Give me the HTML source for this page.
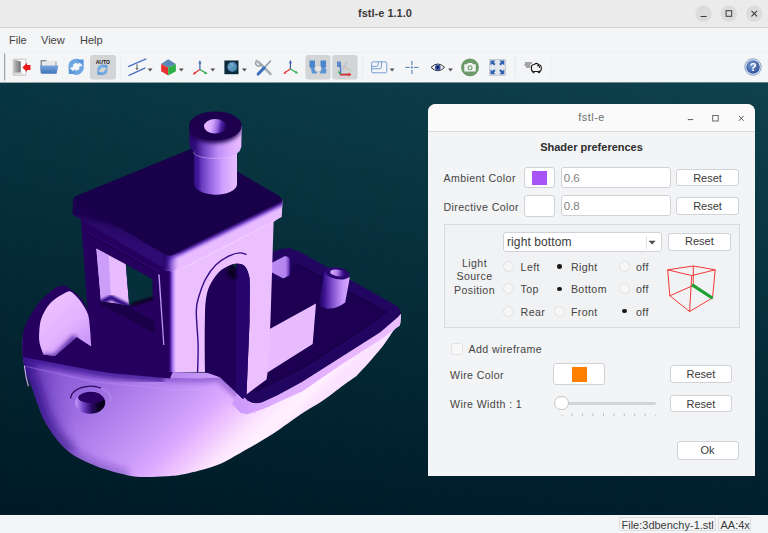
<!DOCTYPE html>
<html><head><meta charset="utf-8"><title>fstl-e 1.1.0</title>
<style>
*{box-sizing:border-box;margin:0;padding:0}
html,body{width:768px;height:533px;overflow:hidden;background:#f4f5f7;font-family:"Liberation Sans",sans-serif;font-size:11px;color:#3d3d3d}
.abs{position:absolute}
#titlebar{left:0;top:0;width:768px;height:28px;background:#ebebeb;border-bottom:1px solid #cfcfcf}
#title{left:1px;width:768px;top:7px;text-align:center;font-weight:bold;color:#3a3a3a;font-size:11px}
.wbtn{width:17px;height:17px;border-radius:50%;background:#dcdcdc;top:5px}
#menubar{left:0;top:28px;width:768px;height:24px;background:#f4f5f7}
.menu{top:34px;font-size:11px;color:#424242}
#toolbar{left:0;top:52px;width:768px;height:31px;background:#f4f5f7;border-top:1px solid #eeeff1}
#viewport{left:0;top:82.6px;width:768px;height:432.1px;background:#04303c}
#statusbar{left:0;top:515px;width:768px;height:18px;background:#f4f5f7}
.sbox{top:516.8px;height:14.6px;border:1px solid #dcdddf;border-radius:1px;background:#f4f5f7;font-size:11px;line-height:14px;padding-left:1.2px;overflow:visible;color:#3a3a3a;white-space:nowrap}
#dlg{left:428px;top:104px;width:327px;height:372px;background:#f3f4f5;border-radius:8px 8px 0 0;overflow:hidden}
#dlgtitle{left:0;top:0;width:327px;height:28px;background:#fafafa;border-bottom:1px solid #dcdcdc}
.btn{background:#fff;border:1px solid #cfd2d6;border-radius:3px;text-align:center;font-size:11px;color:#3a3a3a}
.lbl{font-size:10.6px;letter-spacing:.4px;color:#444;white-space:nowrap}
.inp{background:#fff;border:1px solid #cfd2d6;border-radius:3px;font-size:11.5px;color:#808080;padding-left:1.6px}
.radio{width:11px;height:11px;border-radius:50%;border:1px solid #e0e1e3;background:#f6f6f7}
.dot{width:4.6px;height:4.6px;border-radius:50%;background:#1a1a1a}
</style></head><body>
<div id="titlebar" class="abs"></div>
<div id="title" class="abs">fstl-e 1.1.0</div>
<svg class="abs" style="left:690px;top:0" width="78" height="28" viewBox="690 0 78 28">
<circle cx="703.6" cy="13.6" r="8.2" fill="#dcdcdc"/><circle cx="728.9" cy="13.6" r="8.2" fill="#dcdcdc"/><circle cx="754.3" cy="13.6" r="8.2" fill="#dcdcdc"/>
<path d="M700.6 16.5 H706.6" stroke="#3a3a3a" stroke-width="1" fill="none"/>
<rect x="726.1" y="10.7" width="5.6" height="5.6" stroke="#3a3a3a" stroke-width="1" fill="none"/>
<path d="M751.5 10.8 L757.1 16.4 M757.1 10.8 L751.5 16.4" stroke="#3a3a3a" stroke-width="1.1" fill="none"/>
</svg>
<div id="menubar" class="abs"></div>
<div class="abs menu" style="left:9px">File</div>
<div class="abs menu" style="left:41px">View</div>
<div class="abs menu" style="left:80px">Help</div>
<div id="toolbar" class="abs"></div>
<svg class="abs" style="left:0;top:52px" width="768" height="31" viewBox="0 52 768 31">
<defs>
<linearGradient id="door" x1="0" y1="0" x2="1" y2="0"><stop offset="0" stop-color="#c4c4c4"/><stop offset="0.45" stop-color="#9a9a9a"/><stop offset="1" stop-color="#6e7278"/></linearGradient>
<linearGradient id="fold" x1="0" y1="0" x2="0" y2="1"><stop offset="0" stop-color="#7aa6dc"/><stop offset="1" stop-color="#3f74b8"/></linearGradient>
<radialGradient id="helpg" cx="0.4" cy="0.35" r="0.7"><stop offset="0" stop-color="#7a9ad0"/><stop offset="1" stop-color="#2a4f98"/></radialGradient>
<radialGradient id="sph" cx="0.35" cy="0.35" r="0.8"><stop offset="0" stop-color="#8ab4e0"/><stop offset="1" stop-color="#2f6a9a"/></radialGradient>
</defs>
<rect x="4.2" y="53.5" width="1" height="27" fill="#8c8c8c"/>
<!-- exit -->
<path d="M13.2 59.2 L25.8 59.2 L25.8 75.3 L13.2 75.3 Z" fill="#fbfbfb" stroke="#a6a6a6" stroke-width="0.6"/>
<path d="M13.5 59.5 L20.8 61.4 L20.8 72.9 L13.5 75 Z" fill="url(#door)"/>
<path d="M13.5 72.5 L20.8 72.2 L25.5 75 L13.5 75 Z" fill="#dcdcdc" opacity="0.9"/>
<path d="M22.4 67.4 L27 62.7 L27 64.9 L30.5 64.9 L30.5 69.9 L27 69.9 L27 72.1 Z" fill="#ea1a1a"/>
<!-- folder -->
<path d="M40.5 60 L46 60 L47.5 61.5 L56.5 61.5 L56.5 73 L40.5 73 Z" fill="#8a8f98"/>
<path d="M42 61.5 L55.5 60.5 L55.5 66 L42 66 Z" fill="#e8e8e8"/>
<path d="M39.8 65.5 L58.4 65.5 L56.5 73.7 L41.3 73.7 Z" fill="url(#fold)"/>
<!-- reload -->
<g fill="none" stroke="#6ea6e2" stroke-width="4.2">
<path d="M71 67.6 A5.1 5.1 0 0 1 79.6 62.6"/>
<path d="M81.3 66 A5.1 5.1 0 0 1 72.7 71"/>
</g>
<path d="M76.6 59.6 L83.6 59.6 L83.6 66.6 Z" fill="#5a96da"/>
<path d="M75.7 74 L68.7 74 L68.7 67 Z" fill="#5a96da"/>
<!-- auto -->
<rect x="90" y="55" width="26" height="24.6" rx="3" fill="#d3d4d6"/>
<text x="102.8" y="64.4" font-family="Liberation Sans, sans-serif" font-size="5.1" font-weight="bold" text-anchor="middle" fill="#141414">AUTO</text>
<g fill="none" stroke="#74aae4" stroke-width="2.8">
<path d="M99 70.3 A3.5 3.5 0 0 1 104.8 66.9"/>
<path d="M105.9 69.3 A3.5 3.5 0 0 1 100.1 72.7"/>
</g>
<path d="M102.6 64.8 L107.4 64.8 L107.4 69.6 Z" fill="#5f9adc"/>
<path d="M102.2 74.7 L97.4 74.7 L97.4 69.9 Z" fill="#5f9adc"/>
<rect x="120.3" y="56" width="0.8" height="22" fill="#e9eaec"/>
<!-- lines -->
<g stroke="#4a72c4" stroke-width="1.3" fill="none"><path d="M128.1 66.6 L146.2 58.8"/><path d="M128.5 75.7 L145.4 67.8"/></g>
<path d="M137 64.2 V69.2 M135.8 68 L137 69.4 L138.2 68" stroke="#333" stroke-width="0.8" fill="none"/>
<path d="M147.7 68.4 H152.5 L150.1 71.4 Z" fill="#505050"/>
<!-- cube -->
<path d="M168.2 59.3 L175.9 63.9 L168.2 67.4 L161.1 63.9 Z" fill="#5a86b8"/>
<path d="M161.1 63.9 L168.2 67.4 L168.2 75.4 L161.1 71.2 Z" fill="#e83232"/>
<path d="M175.9 63.9 L168.2 67.4 L168.2 75.4 L175.9 71.2 Z" fill="#2cb048"/>
<path d="M178.9 68.4 H183.7 L181.3 71.4 Z" fill="#505050"/>
<!-- axes -->
<g fill="none" stroke-width="1.2"><path d="M199.9 69.5 V62" stroke="#3a5fae"/><path d="M199.9 69.5 L194.4 73.2" stroke="#e03030"/><path d="M199.9 69.5 L205.8 73" stroke="#2aa848"/></g>
<path d="M199.9 60 L201.4 63.4 H198.4 Z" fill="#3a5fae"/><path d="M192.6 74.4 L194.6 71.8 L196 74 Z" fill="#e03030"/><path d="M207.6 74.1 L205.5 71.6 L204.2 73.9 Z" fill="#2aa848"/>
<path d="M210.35 68.4 H215.15 L212.75 71.4 Z" fill="#505050"/>
<!-- sphere -->
<rect x="224.4" y="60.5" width="14.1" height="13.7" fill="#0b2a3c"/>
<circle cx="232.3" cy="67" r="4.9" fill="url(#sph)"/>
<path d="M228.6 64 L235.6 70.4" stroke="#3fa0a0" stroke-width="1.1"/>
<path d="M242 68.4 H246.8 L244.4 71.4 Z" fill="#505050"/>
<!-- tools -->
<path d="M258.5 62 L270.5 74" stroke="#a8b0b8" stroke-width="2.6" stroke-linecap="round"/>
<path d="M257.5 60.3 A3 3 0 1 0 261.5 64" fill="none" stroke="#9aa2aa" stroke-width="1.6"/>
<path d="M270.5 61 L264 68" stroke="#8a96a4" stroke-width="1.5" stroke-linecap="round"/>
<path d="M264 68 L258.2 74" stroke="#3a72c0" stroke-width="3.2" stroke-linecap="round"/>
<!-- axes 2 -->
<g fill="none" stroke-width="1.2"><path d="M290.4 69 V61.8" stroke="#3a5fae"/><path d="M290.4 69 L285 72.5" stroke="#e03030"/><path d="M290.4 69 L296.5 72.4" stroke="#2aa848"/></g>
<path d="M290.4 59.8 L291.9 63.2 H288.9 Z" fill="#3a5fae"/><path d="M283.2 73.8 L285.2 71.2 L286.6 73.4 Z" fill="#e03030"/><path d="M298.3 73.5 L296.2 71 L294.9 73.3 Z" fill="#2aa848"/>
<!-- checked 1 -->
<rect x="305.4" y="55" width="25.2" height="24.6" rx="3" fill="#d3d4d6"/>
<path d="M309.5 60.5 L315 60.5 L315 67 L312.5 69.5 L309.5 67 Z" fill="#4a86cc"/>
<path d="M320.5 60.5 L326 60.5 L326 67 L323.5 69.5 L320.5 67 Z" fill="#4a86cc"/>
<path d="M311 69 L316 67 L317 73.5 L312 73.5 Z" fill="#5a94d4"/>
<path d="M321 67 L326.5 69 L326 73.5 L320 73.5 Z" fill="#5a94d4"/>
<circle cx="318" cy="68.6" r="3.4" fill="#e6e6e6" stroke="#aaa" stroke-width="0.5"/>
<!-- checked 2 -->
<rect x="332.2" y="55" width="25.4" height="24.6" rx="3" fill="#d3d4d6"/>
<path d="M337 61.5 L341 61.5 L341 67 L337 67 Z" fill="#5a8ac8"/>
<path d="M340.5 65 V74.5 H350" fill="none" stroke="#4a7ac0" stroke-width="1.4"/>
<path d="M340 74.6 H349" stroke="#e82c2c" stroke-width="1.6"/><path d="M351.5 74.6 L348.5 72.8 V76.4 Z" fill="#e82c2c"/>
<path d="M340.5 74 L338.2 71.5" stroke="#2aa848" stroke-width="1.4"/>
<path d="M341 72 L347 62" stroke="#8ab8e0" stroke-width="0.8"/><path d="M344 66 L351.5 71" stroke="#9ad0a8" stroke-width="0.8"/><path d="M343 65 L347 70" stroke="#f0a0a0" stroke-width="0.8"/>
<rect x="362" y="56" width="0.8" height="22" fill="#e9eaec"/>
<!-- rects -->
<g fill="none" stroke="#6a94d0" stroke-width="0.9"><rect x="371.6" y="61.8" width="15.2" height="11" rx="1.5"/><path d="M371.6 68.8 H379 Q381.5 68.8 381.5 66.3 V61.8"/><path d="M371.6 66.4 H376.2 Q378.2 66.4 378.2 64.4 V61.8"/></g>
<path d="M389.7 68.4 H394.5 L392.1 71.4 Z" fill="#505050"/>
<!-- crosshair -->
<g stroke="#3a6ab0" stroke-width="0.9"><path d="M411.9 60.8 V65.2 M411.9 69.6 V74 M405.3 67.4 H409.7 M414.1 67.4 H418.5"/><path d="M411.9 66.4 V68.4 M410.9 67.4 H412.9"/></g>
<!-- eye -->
<path d="M431 67.4 Q437.8 60.6 444.6 67.4 Q437.8 74.2 431 67.4 Z" fill="#f8f8f8" stroke="#333" stroke-width="1"/>
<circle cx="437.8" cy="67.4" r="2.9" fill="#3a5cb0"/><circle cx="437.8" cy="67.4" r="1.3" fill="#101a40"/>
<path d="M448.1 68.4 H452.9 L450.5 71.4 Z" fill="#505050"/>
<!-- camera -->
<circle cx="470" cy="67.4" r="8.9" fill="#6b9a68"/>
<path d="M464.3 64.3 H467 L468 62.9 H472 L473 64.3 H475.7 V71.6 H464.3 Z" fill="#f4f4f4"/>
<circle cx="470" cy="67.8" r="2.5" fill="#6b9a68"/><circle cx="470" cy="67.8" r="1.5" fill="#e8f0e8"/>
<!-- fullscreen -->
<rect x="489.5" y="59.5" width="15.8" height="15.8" fill="#e4e7ec" stroke="#b4b8be" stroke-width="0.6"/>
<g fill="#2a62b0"><path d="M490.5 60.5 H495.5 L493.8 62.2 L495.6 64 L494 65.6 L492.2 63.8 L490.5 65.5 Z"/><path d="M504.3 60.5 H499.3 L501 62.2 L499.2 64 L500.8 65.6 L502.6 63.8 L504.3 65.5 Z"/><path d="M490.5 74.3 H495.5 L493.8 72.6 L495.6 70.8 L494 69.2 L492.2 71 L490.5 69.3 Z"/><path d="M504.3 74.3 H499.3 L501 72.6 L499.2 70.8 L500.8 69.2 L502.6 71 L504.3 69.3 Z"/></g>
<rect x="514.8" y="56" width="0.8" height="22" fill="#e6e7e9"/>
<!-- rabbit -->
<g fill="none" stroke="#1a1a1a" stroke-width="1.1"><path d="M531.5 68 Q531 64.5 534.5 64.5 Q536 62.2 538.5 64.5 Q541.5 65 541.3 68.5 Q541.5 71.5 538.5 71.5 L533 71.5 Q531 71 531.5 68 Z"/><path d="M537 66 Q539.5 64.5 539.5 68"/><path d="M533 71.5 Q532.5 73 534.5 72.6 M538 71.5 Q538 73.2 540 72.4"/></g>
<path d="M525 63 H532 M524.5 65 H530.5 M526 67 H530.5" stroke="#444" stroke-width="0.9"/>
<rect x="550.4" y="56" width="0.8" height="22" fill="#ecedef"/>
<!-- help -->
<circle cx="753" cy="67" r="8.2" fill="#e8ecf4" stroke="#6a86c0" stroke-width="0.8"/>
<circle cx="753" cy="67" r="6.8" fill="url(#helpg)"/>
<text x="753" y="71" font-family="Liberation Sans, sans-serif" font-size="11" font-weight="bold" text-anchor="middle" fill="#fff">?</text>
</svg>

<div id="viewport" class="abs"></div>
<svg class="abs" style="left:0;top:0" width="768" height="533" viewBox="0 0 768 533">
<defs>
<linearGradient id="bgL" x1="0" y1="0" x2="0" y2="1"><stop offset="0" stop-color="#083642"/><stop offset="1" stop-color="#001a26"/></linearGradient>
<linearGradient id="bgR" x1="0" y1="0" x2="0" y2="1"><stop offset="0" stop-color="#0f424d"/><stop offset="1" stop-color="#001f2e"/></linearGradient>
<linearGradient id="mH" x1="0" y1="0" x2="1" y2="0"><stop offset="0" stop-color="#000"/><stop offset="1" stop-color="#fff"/></linearGradient>
<mask id="mk"><rect x="0" y="82" width="768" height="434" fill="url(#mH)"/></mask>
<filter id="b1" x="-20%" y="-20%" width="140%" height="140%"><feGaussianBlur stdDeviation="1"/></filter>
<filter id="b2" x="-20%" y="-20%" width="140%" height="140%"><feGaussianBlur stdDeviation="2"/></filter>
<filter id="b3" x="-30%" y="-30%" width="160%" height="160%"><feGaussianBlur stdDeviation="3.5"/></filter>
<linearGradient id="hull" gradientUnits="userSpaceOnUse" x1="30" y1="394" x2="178.5" y2="542.5">
 <stop offset="0" stop-color="#8858d4"/><stop offset="0.19" stop-color="#9a6ae0"/><stop offset="0.36" stop-color="#b080ec"/><stop offset="0.54" stop-color="#c898f8"/><stop offset="0.66" stop-color="#dcaaff"/><stop offset="0.75" stop-color="#eec4ff"/><stop offset="0.85" stop-color="#fce6ff"/><stop offset="0.93" stop-color="#fff0ff"/><stop offset="1" stop-color="#fbe2ff"/></linearGradient>
<linearGradient id="hullL" gradientUnits="userSpaceOnUse" x1="22" y1="380" x2="62" y2="370">
 <stop offset="0" stop-color="#160044"/><stop offset="0.09" stop-color="#240868" stop-opacity="0.95"/><stop offset="0.25" stop-color="#3a1290" stop-opacity="0.7"/><stop offset="0.5" stop-color="#3a1290" stop-opacity="0.3"/><stop offset="0.75" stop-color="#3a1290" stop-opacity="0.1"/><stop offset="1" stop-color="#3a1290" stop-opacity="0"/></linearGradient>
<linearGradient id="sband" gradientUnits="userSpaceOnUse" x1="240" y1="0" x2="400" y2="0">
 <stop offset="0" stop-color="#cc9afa"/><stop offset="0.2" stop-color="#dcaaff"/><stop offset="0.7" stop-color="#e8b6ff"/><stop offset="1" stop-color="#ecbeff"/></linearGradient>
<linearGradient id="band" gradientUnits="userSpaceOnUse" x1="25" y1="0" x2="240" y2="0">
 <stop offset="0" stop-color="#4a1fa8"/><stop offset="0.45" stop-color="#9464e0"/><stop offset="1" stop-color="#c896fb"/></linearGradient>
<linearGradient id="pipe" gradientUnits="userSpaceOnUse" x1="194" y1="0" x2="238" y2="0">
 <stop offset="0" stop-color="#3a1290"/><stop offset="0.09" stop-color="#3e1698"/><stop offset="0.18" stop-color="#6a3cc0"/><stop offset="0.42" stop-color="#a070e8"/><stop offset="0.66" stop-color="#d0a0ff"/><stop offset="0.89" stop-color="#e4b8ff"/><stop offset="1" stop-color="#e8bcff"/></linearGradient>
<linearGradient id="flange" gradientUnits="userSpaceOnUse" x1="189" y1="0" x2="242" y2="0">
 <stop offset="0" stop-color="#2a0870"/><stop offset="0.11" stop-color="#2e0c78"/><stop offset="0.28" stop-color="#7040c0"/><stop offset="0.56" stop-color="#c090f8"/><stop offset="0.83" stop-color="#e0b0ff"/><stop offset="1" stop-color="#e8bcff"/></linearGradient>
<linearGradient id="hole" gradientUnits="userSpaceOnUse" x1="204" y1="124" x2="226" y2="128">
 <stop offset="0" stop-color="#e8baff"/><stop offset="0.35" stop-color="#d8a8ff"/><stop offset="0.6" stop-color="#9a6ae0"/><stop offset="0.78" stop-color="#4a1fa0"/><stop offset="1" stop-color="#22025c"/></linearGradient>
<linearGradient id="roofR" gradientUnits="userSpaceOnUse" x1="164" y1="0" x2="180" y2="0">
 <stop offset="0" stop-color="#26066a"/><stop offset="0.25" stop-color="#4a1fa4"/><stop offset="0.5" stop-color="#9c6ce6"/><stop offset="0.8" stop-color="#d8a8ff"/><stop offset="1" stop-color="#e8bcff"/></linearGradient>
<linearGradient id="roofC" gradientUnits="userSpaceOnUse" x1="164" y1="0" x2="180" y2="0">
 <stop offset="0" stop-color="#26066a"/><stop offset="0.25" stop-color="#3a1290" stop-opacity="0.92"/><stop offset="0.5" stop-color="#6a3cc4" stop-opacity="0.65"/><stop offset="0.8" stop-color="#a878ec" stop-opacity="0.25"/><stop offset="1" stop-color="#e8bcff" stop-opacity="0"/></linearGradient>
<linearGradient id="roofLf" gradientUnits="userSpaceOnUse" x1="120" y1="225" x2="116" y2="240">
 <stop offset="0" stop-color="#1c0050"/><stop offset="0.3" stop-color="#280866"/><stop offset="1" stop-color="#2d0b72"/></linearGradient>
<linearGradient id="roofE" gradientUnits="userSpaceOnUse" x1="228.5" y1="226.8" x2="232" y2="234">
 <stop offset="0" stop-color="#19004b"/><stop offset="0.35" stop-color="#5a2ab4" stop-opacity="0.9"/><stop offset="0.7" stop-color="#b07ef2" stop-opacity="0.5"/><stop offset="1" stop-color="#e8bcff" stop-opacity="0"/></linearGradient>
<linearGradient id="wall" gradientUnits="userSpaceOnUse" x1="168.5" y1="0" x2="176.5" y2="0">
 <stop offset="0" stop-color="#26005e"/><stop offset="0.25" stop-color="#4a1fa4"/><stop offset="0.5" stop-color="#a070e8"/><stop offset="0.8" stop-color="#dcaeff"/><stop offset="1" stop-color="#ecc0ff"/></linearGradient>
<linearGradient id="bowin" gradientUnits="userSpaceOnUse" x1="45" y1="300" x2="85" y2="345">
 <stop offset="0" stop-color="#eec2ff"/><stop offset="0.6" stop-color="#e2b2ff"/><stop offset="1" stop-color="#c896f8"/></linearGradient>
<linearGradient id="rod" gradientUnits="userSpaceOnUse" x1="320" y1="0" x2="349" y2="0">
 <stop offset="0" stop-color="#260666"/><stop offset="0.15" stop-color="#3a1290"/><stop offset="0.4" stop-color="#7a4ac8"/><stop offset="0.75" stop-color="#c090f8"/><stop offset="1" stop-color="#d8a8ff"/></linearGradient>
<linearGradient id="rodh" gradientUnits="userSpaceOnUse" x1="330" y1="0" x2="346" y2="0">
 <stop offset="0" stop-color="#dcaeff"/><stop offset="0.45" stop-color="#b080ec"/><stop offset="0.75" stop-color="#4a1fa0"/><stop offset="1" stop-color="#22025c"/></linearGradient>
<linearGradient id="hawse" gradientUnits="userSpaceOnUse" x1="75.2" y1="0" x2="105.1" y2="0">
 <stop offset="0" stop-color="#c898fa"/><stop offset="0.08" stop-color="#b080ec"/><stop offset="0.3" stop-color="#6a3cc0"/><stop offset="0.55" stop-color="#2a0868"/><stop offset="0.8" stop-color="#0a0020"/><stop offset="1" stop-color="#08001c"/></linearGradient>
<linearGradient id="patch" gradientUnits="userSpaceOnUse" x1="272" y1="0" x2="291" y2="0">
 <stop offset="0" stop-color="#bc8cf4"/><stop offset="0.72" stop-color="#b484ee"/><stop offset="0.88" stop-color="#7040c0"/><stop offset="1" stop-color="#2a0868"/></linearGradient>
</defs>
<rect x="0" y="82.6" width="768" height="432.1" fill="url(#bgL)"/>
<rect x="0" y="82.6" width="768" height="432.1" fill="url(#bgR)" mask="url(#mk)"/>

<clipPath id="hc"><path d="M23.5 332.0 C23.3 334.2 22.5 340.7 22.4 345.0 C22.3 349.3 22.4 353.5 23.0 358.0 C23.6 362.5 24.6 367.3 26.0 372.0 C27.4 376.7 29.7 381.2 31.5 386.0 C33.3 390.8 34.6 395.2 36.7 400.8 C38.8 406.4 40.8 413.4 44.0 419.6 C47.2 425.9 51.6 432.7 56.0 438.3 C60.4 443.9 64.8 448.8 70.5 453.0 C76.2 457.2 83.5 460.6 90.0 463.5 C96.5 466.4 103.2 468.6 109.6 470.6 C116.0 472.6 122.4 474.3 128.3 475.4 C134.2 476.5 138.8 476.9 145.0 477.0 C151.2 477.1 159.1 476.8 165.8 476.3 C172.5 475.8 176.6 475.8 185.0 474.0 C193.4 472.2 206.8 469.1 216.0 465.6 C225.2 462.1 230.8 458.3 240.0 453.2 C249.2 448.1 262.9 440.1 271.0 435.0 C279.1 429.9 283.1 426.6 288.8 422.7 C294.5 418.8 299.2 415.4 305.0 411.6 C310.8 407.8 317.3 404.4 323.7 400.0 C330.1 395.6 337.9 389.2 343.4 385.2 C348.9 381.2 354.3 377.5 356.5 376.0 C358.5 373.8 363.9 368.2 368.5 363.0 C373.1 357.8 379.8 350.0 384.0 344.5 C388.2 339.0 391.4 333.2 394.0 330.0 C396.6 326.8 398.7 327.0 399.8 325.0 C400.9 323.0 400.6 319.2 400.8 318.0 L400.8 314 L380 330 L339.4 355 L302 379 L277.6 392 L256 400 L243 396 L219.6 373 L170 372 L114 368 L62 360 L22.5 353 Z"/></clipPath>
<path d="M23.5 332.0 C23.3 334.2 22.5 340.7 22.4 345.0 C22.3 349.3 22.4 353.5 23.0 358.0 C23.6 362.5 24.6 367.3 26.0 372.0 C27.4 376.7 29.7 381.2 31.5 386.0 C33.3 390.8 34.6 395.2 36.7 400.8 C38.8 406.4 40.8 413.4 44.0 419.6 C47.2 425.9 51.6 432.7 56.0 438.3 C60.4 443.9 64.8 448.8 70.5 453.0 C76.2 457.2 83.5 460.6 90.0 463.5 C96.5 466.4 103.2 468.6 109.6 470.6 C116.0 472.6 122.4 474.3 128.3 475.4 C134.2 476.5 138.8 476.9 145.0 477.0 C151.2 477.1 159.1 476.8 165.8 476.3 C172.5 475.8 176.6 475.8 185.0 474.0 C193.4 472.2 206.8 469.1 216.0 465.6 C225.2 462.1 230.8 458.3 240.0 453.2 C249.2 448.1 262.9 440.1 271.0 435.0 C279.1 429.9 283.1 426.6 288.8 422.7 C294.5 418.8 299.2 415.4 305.0 411.6 C310.8 407.8 317.3 404.4 323.7 400.0 C330.1 395.6 337.9 389.2 343.4 385.2 C348.9 381.2 354.3 377.5 356.5 376.0 C358.5 373.8 363.9 368.2 368.5 363.0 C373.1 357.8 379.8 350.0 384.0 344.5 C388.2 339.0 391.4 333.2 394.0 330.0 C396.6 326.8 398.7 327.0 399.8 325.0 C400.9 323.0 400.6 319.2 400.8 318.0 L400.8 314 L380 330 L339.4 355 L302 379 L277.6 392 L256 400 L243 396 L219.6 373 L170 372 L114 368 L62 360 L22.5 353 Z" fill="url(#hull)"/>
<path d="M23.5 332.0 C23.3 334.2 22.5 340.7 22.4 345.0 C22.3 349.3 22.4 353.5 23.0 358.0 C23.6 362.5 24.6 367.3 26.0 372.0 C27.4 376.7 29.7 381.2 31.5 386.0 C33.3 390.8 34.6 395.2 36.7 400.8 C38.8 406.4 40.8 413.4 44.0 419.6 C47.2 425.9 51.6 432.7 56.0 438.3 C60.4 443.9 64.8 448.8 70.5 453.0 C76.2 457.2 83.5 460.6 90.0 463.5 C96.5 466.4 106.3 469.4 109.6 470.6 L100 350 Z" fill="url(#hullL)"/>
<g clip-path="url(#hc)"><path d="M22.4 345.0 C22.5 347.2 22.4 353.5 23.0 358.0 C23.6 362.5 24.6 367.3 26.0 372.0 C27.4 376.7 29.7 381.2 31.5 386.0 C33.3 390.8 34.6 395.2 36.7 400.8 C38.8 406.4 40.8 413.4 44.0 419.6 C47.2 425.9 51.6 432.7 56.0 438.3 C60.4 443.9 68.1 450.6 70.5 453.0" fill="none" stroke="#34108a" stroke-opacity="0.55" stroke-width="16" filter="url(#b3)"/><path d="M70.5 453.0 C73.8 454.8 83.5 460.6 90.0 463.5 C96.5 466.4 103.2 468.6 109.6 470.6 C116.0 472.6 125.2 474.6 128.3 475.4" fill="none" stroke="#4a1fa0" stroke-opacity="0.35" stroke-width="12" filter="url(#b3)"/></g>
<clipPath id="bc"><path d="M22.5 356.5 L62 364 L93.3 370 L114 373 L170 378 L200 378.5 L219.6 377.5 L225 379.5 L243.4 395.9 L247.3 400.5 L253.25 403.8 L261.8 402.5 L277.6 395.2 L302 382 L339.4 358.25 L380 332.6 L400 316 L400 325.3 L380 340 L340 365.5 L302 391.5 L264.4 408.4 L247.3 414.3 L240.8 413 L225 396.5 L218.5 389.8 L170 389.4 L93 381.7 L33 368 L24 366 Z"/></clipPath>
<g clip-path="url(#bc)"><path d="M22.5 356.5 L62 364 L93.3 370 L114 373 L165 377.6" fill="none" stroke="#3a1290" stroke-opacity="0.75" stroke-width="12" filter="url(#b2)"/><path d="M165 377.6 L200 378.5 L219.6 377.5 L243 400" fill="none" stroke="#5a2ab0" stroke-opacity="0.4" stroke-width="9" filter="url(#b2)"/></g>
<path d="M238 391 L243.4 395.9 L247.3 400.5 L253.25 403.8 L261.8 402.5 L277.6 395.2 L302 382 L339.4 358.25 L380 332.6 L398.4 316.7 L400.8 314 L400 325.3 L380 340 L340 365.5 L302 391.5 L264.4 408.4 L247.3 414.3 L240.8 413 L232 404 Z" fill="url(#sband)"/>
<path d="M24 366 L33 368 L93 381.7 L170 389.4 L218.5 389.8 L241.5 412.7 L256 412.6" fill="none" stroke="#d0a4ff" stroke-opacity="0.4" stroke-width="0.8"/>
<path d="M24.4 366 Q25.6 377 28.3 385.8" fill="none" stroke="#d4acf6" stroke-width="1.1" stroke-linecap="round"/>
<path d="M22.5 357.0 C22.5 355.0 22.3 349.2 22.5 345.0 C22.7 340.8 22.6 336.2 23.5 332.0 C24.4 327.8 25.6 324.7 28.0 320.0 C30.4 315.3 34.3 308.7 38.0 304.0 C41.7 299.3 46.0 295.1 50.0 292.0 C54.0 288.9 58.2 285.9 62.0 285.6 C65.8 285.4 69.2 288.2 72.5 290.5 C75.8 292.8 79.5 296.2 82.0 299.5 C84.5 302.8 86.6 308.2 87.5 310.0 L81 219 L172 270 L172.7 372 L170 378.5 L114 373.5 L93.3 370.5 L62 364.5 Z" fill="#26005e"/>
<path d="M43.3 354.4 C42.7 352.5 40.3 346.6 39.6 343.0 C38.9 339.4 39.0 336.2 39.2 332.5 C39.4 328.8 39.7 324.5 40.6 321.0 C41.5 317.5 42.8 314.7 44.4 311.7 C46.0 308.7 48.2 305.4 50.5 303.0 C52.8 300.6 55.6 298.6 57.9 297.0 C60.2 295.4 62.4 294.1 64.5 293.2 C66.6 292.3 68.4 290.9 70.4 291.5 C72.4 292.1 74.6 294.5 76.5 296.5 C78.4 298.5 80.0 300.2 81.9 303.3 C83.8 306.4 86.7 310.3 88.1 314.8 C89.5 319.3 89.8 327.8 90.2 330.4 L91.2 346.5 L76.7 337 L55 356 Z" fill="url(#bowin)"/>
<clipPath id="bic"><path d="M43.3 354.4 C42.7 352.5 40.3 346.6 39.6 343.0 C38.9 339.4 39.0 336.2 39.2 332.5 C39.4 328.8 39.7 324.5 40.6 321.0 C41.5 317.5 42.8 314.7 44.4 311.7 C46.0 308.7 48.2 305.4 50.5 303.0 C52.8 300.6 55.6 298.6 57.9 297.0 C60.2 295.4 62.4 294.1 64.5 293.2 C66.6 292.3 68.4 290.9 70.4 291.5 C72.4 292.1 74.6 294.5 76.5 296.5 C78.4 298.5 80.0 300.2 81.9 303.3 C83.8 306.4 86.7 310.3 88.1 314.8 C89.5 319.3 89.8 327.8 90.2 330.4 L91.2 346.5 L76.7 337 L55 356 Z"/></clipPath>
<g clip-path="url(#bic)"><path d="M40 358 L56 357.5 L76 337" fill="none" stroke="#4a1fa0" stroke-width="7" stroke-opacity="0.85" filter="url(#b2)"/></g>
<!-- front window -->
<path d="M88.4 234 L159.3 273.4" fill="none" stroke="#130038" stroke-width="1"/>
<path d="M88.4 232.8 L159.3 272.2" fill="none" stroke="#34108a" stroke-opacity="0.6" stroke-width="1.2"/>
<clipPath id="rvc"><path d="M96.3 248.6 L125.8 264.2 L129.2 305.4 L101 301.6 Z"/></clipPath>
<path d="M96.3 248.6 L125.8 264.2 L129.2 305.4 L101 301.6 Z" fill="#e8bcff"/>
<g clip-path="url(#rvc)">
<path d="M96.3 248.6 L108.5 255 L111 297 L101 306 Z" fill="#cc9efa"/>
<path d="M99 303.5 L111 297.5 L130 307" fill="none" stroke="#34108a" stroke-width="5" filter="url(#b1)"/>
</g>
<path d="M125.8 264.2 L152.5 279 L152.7 298 L140 301 L133 305 L129.2 305.4 Z" fill="#052f3b"/>
<path d="M130 305.4 L134 302 L141 300.3 L152.7 296.3 L152.7 300 L141 303.6 L133 306 Z" fill="#090022" filter="url(#b1)"/>
<path d="M100.5 301.3 L129.2 305.4 L131 308.6 L154.5 321 L154.8 334 L130.5 320.2 L101 305 Z" fill="#1a0048"/>
<path d="M158.2 274 L159.7 274.7 L164.4 345 L163.2 345 Z" fill="#c096f6"/>
<!-- stern dark -->
<path d="M268 254 L280 249 L289.6 248 L300 252 L393.75 304.2 Q400 307 400.8 313.6 L398.4 316.7 L380 332.6 L339.4 358.25 L302 382 L277.6 395.2 L261.8 402.5 Q254 404.8 247.3 400.5 L243.4 395.9 L225 379.5 L219.6 377 L207 372 L207 300 Z" fill="#220560"/>
<path d="M272 262.7 L284.5 256.3 Q288.5 255.5 290 259 L289.6 275 L283.4 278.6 L272 272.4 Z" fill="url(#patch)"/>
<path d="M293 262 L386 312 L361.8 330 L300 369.4 L256 391 L246 394 L250 300 L273 281 L290 277 Z" fill="#1d0052"/>
<path d="M296 263.5 L386.5 311.7 L361.8 330 L300 369.4 L256 391" fill="none" stroke="#0c0030" stroke-width="0.7"/>
<!-- rod holder -->
<path d="M324.5 271.5 L319 303.5 Q320 307 327 308.4 Q336 309.5 345.2 302.5 L349.8 277.5 Z" fill="url(#rod)"/>
<ellipse cx="337.3" cy="273.3" rx="12.6" ry="5.8" fill="#2a0870" transform="rotate(10 337.3 273.3)"/>
<ellipse cx="338" cy="273" rx="7.9" ry="3.4" fill="url(#rodh)" transform="rotate(8 338 273)"/>
<!-- box -->
<path d="M268.8 329.4 L316 303.5 L312.7 344 L267.5 372.4 Z" fill="#e8bbff"/>
<!-- cabin right wall -->
<path d="M168.5 266 L281.7 216 L273.6 222 L270.5 320 L268 370 L266.5 379.4 L244.6 396 L246.7 372 L207 372 L172.7 372 L168.5 372 Z" fill="url(#wall)"/>
<!-- door -->
<path d="M205.0 372.0 C204.9 367.5 204.7 353.7 204.7 345.0 C204.7 336.3 204.7 327.3 204.9 320.0 C205.1 312.7 204.9 306.9 205.7 301.3 C206.4 295.7 207.2 291.2 209.4 286.3 C211.6 281.4 215.4 275.7 218.8 272.2 C222.2 268.7 226.7 266.7 230.0 265.3 C233.3 263.9 236.0 263.6 238.5 263.8 C241.0 264.0 243.3 264.7 245.0 266.6 C246.7 268.5 248.0 271.7 248.8 275.0 C249.6 278.3 249.7 278.8 249.8 286.3 C249.9 293.8 249.6 314.4 249.6 320.0 L246.5 395 L243 399 L219.6 377 Z" fill="#1f0056"/><clipPath id="dc"><path d="M205.0 372.0 C204.9 367.5 204.7 353.7 204.7 345.0 C204.7 336.3 204.7 327.3 204.9 320.0 C205.1 312.7 204.9 306.9 205.7 301.3 C206.4 295.7 207.2 291.2 209.4 286.3 C211.6 281.4 215.4 275.7 218.8 272.2 C222.2 268.7 226.7 266.7 230.0 265.3 C233.3 263.9 236.0 263.6 238.5 263.8 C241.0 264.0 243.3 264.7 245.0 266.6 C246.7 268.5 248.0 271.7 248.8 275.0 C249.6 278.3 249.7 278.8 249.8 286.3 C249.9 293.8 249.6 314.4 249.6 320.0 L246.5 395 L243 399 L219.6 377 Z"/></clipPath><g clip-path="url(#dc)"><path d="M235.7 262 L252 262 L252 400 L235.7 400 Z" fill="#25056a"/><path d="M229 266 L236.5 263.5 L236.5 279 L231 279 L226 272 Z" fill="#0a0228" filter="url(#b1)"/><path d="M232.5 264.5 L236.5 263.6 L236.3 268.5 Z" fill="#06323a"/></g><path d="M197.6 372.0 C197.7 367.5 198.3 355.2 198.1 345.0 C197.9 334.8 196.1 318.9 196.3 310.7 C196.5 302.5 197.5 301.0 199.1 295.7 C200.7 290.4 202.9 284.0 205.7 278.8 C208.5 273.6 212.2 268.4 216.0 264.7 C219.8 260.9 224.3 258.3 228.2 256.3 C232.1 254.3 236.5 253.2 239.5 252.9 C242.5 252.6 244.9 254.2 246.0 254.4" fill="none" stroke="#340e88" stroke-width="1.4" stroke-linecap="round"/><path d="M183 268.5 L273 221.8" fill="none" stroke="#fbe6ff" stroke-opacity="0.55" stroke-width="0.8"/>
<!-- roof -->
<path d="M73 199 L168 254 L167 270 L72.5 214.6 Z" fill="url(#roofLf)"/>
<path d="M164 252 L282.7 199.2 L281.7 217 L172 271.5 L167 270.5 L164 268.5 Z" fill="#e8bcff"/>
<path d="M75 196.5 Q72 199 76 202 L165 254.5 Q171 257.5 178 253 L278 201.5 Q281.5 199.5 280 196.5 L195.6 147.1 Z" fill="#19004b"/>
<path d="M164 258 L164 250 L277 196 L282.7 199.2 L281.7 217 L167 270 Z" fill="url(#roofE)"/>
<path d="M163 253.4 L165 254.5 Q171 257.5 178 253 L182 251 L182 266.5 L172 271.5 L167 270.5 L163 268 Z" fill="url(#roofC)"/>
<!-- chimney -->
<path d="M194.2 150 L194.2 183.3 A21.4 10.8 0 0 0 237 184.4 L237 152 Z" fill="url(#pipe)"/>
<clipPath id="fc"><path d="M189.2 126 L189.5 145 Q190.5 149.5 194.2 151.5 A21.4 5.8 0 0 0 237 153.5 Q240.5 151 241.3 147 L241.7 126 Z"/></clipPath>
<path d="M189.2 126 L189.5 145 Q190.5 149.5 194.2 151.5 A21.4 5.8 0 0 0 237 153.5 Q240.5 151 241.3 147 L241.7 126 Z" fill="url(#flange)"/>
<g clip-path="url(#fc)"><ellipse cx="214" cy="128.5" rx="27" ry="14.6" fill="#1c004e" filter="url(#b2)"/></g>
<path d="M194.2 151.5 A21.4 5.8 0 0 0 237 153.5" fill="none" stroke="#e6c0ff" stroke-opacity="0.55" stroke-width="0.9"/>
<ellipse cx="215.4" cy="125.8" rx="26.3" ry="14.3" fill="#1c004e"/>
<ellipse cx="215.2" cy="126.3" rx="11.2" ry="7.2" fill="url(#hole)"/>

<!-- hawse -->
<path d="M70.6 397.9 A20.25 12.7 0 0 1 100.9 388" fill="none" stroke="#1c004e" stroke-width="1.3" stroke-linecap="round" opacity="0.9"/>
<path d="M100.9 388 A20.25 12.7 0 0 1 110.8 401" fill="none" stroke="#d4aaff" stroke-width="0.9" stroke-linecap="round" opacity="0.6"/>
<clipPath id="hwc"><ellipse cx="90.2" cy="402.8" rx="15" ry="11"/></clipPath>
<ellipse cx="90.2" cy="402.8" rx="15" ry="11" fill="url(#hawse)"/>
<ellipse cx="91.4" cy="397.5" rx="13.2" ry="5.7" fill="#2a0062" clip-path="url(#hwc)"/>
</svg>
<div id="statusbar" class="abs"></div>
<div class="abs sbox" style="left:619.3px;width:96.4px">File:3dbenchy-1.stl</div>
<div class="abs sbox" style="left:718.3px;width:32.5px">AA:4x</div>
<div id="dlg" class="abs">
<div id="dlgtitle" class="abs"></div>
<div class="abs" style="left:0;top:7.3px;width:327px;text-align:center;font-size:10.8px;letter-spacing:.55px;color:#6e6e6e">fstl-e</div>
<svg class="abs" style="left:250px;top:5px" width="77" height="18" viewBox="0 0 77 18">
<path d="M9.8 10.6 H15.2" stroke="#5a5a5a" stroke-width="1" fill="none"/>
<rect x="34.7" y="6.5" width="5.5" height="5.5" stroke="#5a5a5a" stroke-width="0.9" fill="none"/>
<path d="M60.8 6.9 L65.7 11.8 M65.7 6.9 L60.8 11.8" stroke="#5a5a5a" stroke-width="1" fill="none"/>
</svg>
<div class="abs" style="left:0;top:37px;width:327px;text-align:center;font-weight:bold;font-size:11px;color:#2e2e2e">Shader preferences</div>

<div class="abs lbl" style="left:15.5px;top:68px">Ambient Color</div>
<div class="abs btn" style="left:95.7px;top:62.8px;width:31px;height:21.6px"></div>
<div class="abs" style="left:103.5px;top:66.5px;width:15.4px;height:14.6px;background:#a855f7"></div>
<div class="abs inp" style="left:133.2px;top:63px;width:109.4px;height:21px;line-height:21px">0.6</div>
<div class="abs btn" style="left:248.3px;top:64.6px;width:62.5px;height:17.7px;line-height:16px">Reset</div>

<div class="abs lbl" style="left:15.5px;top:96.5px">Directive Color</div>
<div class="abs btn" style="left:95.7px;top:91.2px;width:31px;height:22px"></div>
<div class="abs inp" style="left:133.2px;top:91.2px;width:109.4px;height:20.8px;line-height:20.6px">0.8</div>
<div class="abs btn" style="left:248.3px;top:93.2px;width:62.5px;height:17.8px;line-height:16px">Reset</div>

<div class="abs" style="left:16px;top:120px;width:295.5px;height:104px;border:1px solid #dadcde;background:#f1f2f3"></div>
<div class="abs inp" style="left:74.5px;top:128.3px;width:159.5px;height:19.4px;line-height:19.6px;color:#3a3a3a;font-size:12px;letter-spacing:.1px;padding-left:3.5px">right bottom</div>
<div class="abs" style="left:218px;top:131.5px;width:1px;height:13px;background:#e2e2e2"></div>
<svg class="abs" style="left:219.5px;top:136.3px" width="9" height="6" viewBox="0 0 9 6"><path d="M0.6 0.8 L7.6 0.8 L4.1 4.6 Z" fill="#4a4a4a"/></svg>
<div class="abs btn" style="left:240.3px;top:129.3px;width:62.3px;height:17.7px;line-height:15.7px">Reset</div>

<div class="abs lbl" style="left:16px;top:152.5px;width:61px;text-align:center;line-height:13.5px;white-space:normal">Light Source Position</div>

<div class="abs radio" style="left:75.3px;top:156.8px"></div><div class="abs lbl" style="left:92.6px;top:156.5px">Left</div>
<div class="abs dot" style="left:129.3px;top:160.1px"></div><div class="abs lbl" style="left:142.9px;top:156.5px">Right</div>
<div class="abs radio" style="left:191.2px;top:156.8px"></div><div class="abs lbl" style="left:208px;top:156.5px">off</div>

<div class="abs radio" style="left:75.3px;top:179.1px"></div><div class="abs lbl" style="left:92.6px;top:179px">Top</div>
<div class="abs dot" style="left:129.3px;top:182.6px"></div><div class="abs lbl" style="left:142.9px;top:179px">Bottom</div>
<div class="abs radio" style="left:191.2px;top:179.1px"></div><div class="abs lbl" style="left:208px;top:179px">off</div>

<div class="abs radio" style="left:75.3px;top:201.6px"></div><div class="abs lbl" style="left:92.6px;top:201.5px">Rear</div>
<div class="abs radio" style="left:126.2px;top:201.6px"></div><div class="abs lbl" style="left:142.9px;top:201.5px">Front</div>
<div class="abs dot" style="left:194.3px;top:204.9px"></div><div class="abs lbl" style="left:208px;top:201.5px">off</div>

<svg class="abs" style="left:236px;top:158px" width="56" height="54" viewBox="664 262 56 54">
<g fill="none" stroke="#f22222" stroke-width="0.9">
<path d="M667.7 269.8 L693.3 266 L715.2 269.8 L691.7 275.6 Z"/>
<path d="M669.8 295.8 L693.3 285.4 L712.5 297.9 L689.6 311.5 Z"/>
<path d="M667.7 269.8 L669.8 295.8 M693.3 266 L693.3 285.4 M715.2 269.8 L712.5 297.9 M691.7 275.6 L689.6 311.5"/>
</g>
<path d="M693 285.4 L711.5 297.5" stroke="#1ea032" stroke-width="3.2" stroke-linecap="round"/>
</svg>

<div class="abs" style="left:23.3px;top:239px;width:11.5px;height:11.5px;border:1px solid #e2e3e5;border-radius:2.5px;background:#f8f8f9"></div>
<div class="abs lbl" style="left:40.5px;top:239px">Add wireframe</div>

<div class="abs lbl" style="left:22px;top:265px">Wire Color</div>
<div class="abs btn" style="left:124.8px;top:259.3px;width:52.2px;height:22px"></div>
<div class="abs" style="left:143.8px;top:263.2px;width:15px;height:14.5px;background:#ff8000"></div>
<div class="abs btn" style="left:242px;top:261.3px;width:61.7px;height:17.6px;line-height:17px">Reset</div>

<div class="abs lbl" style="left:22px;top:293.5px">Wire Width : 1</div>
<div class="abs" style="left:134px;top:297.6px;width:94.2px;height:3.4px;background:#d2d3d5;border-radius:1.7px"></div>
<div class="abs" style="left:126.4px;top:291.5px;width:14.9px;height:14.9px;border-radius:50%;background:#fff;border:1px solid #c6c6c6"></div>
<svg class="abs" style="left:130px;top:308.6px" width="100" height="4" viewBox="0 0 100 4"><path d="M14.2 0.4v2.6 M24.6 0.4v2.6 M35 0.4v2.6 M45.5 0.4v2.6 M55.9 0.4v2.6 M66.3 0.4v2.6 M76.7 0.4v2.6 M87.2 0.4v2.6" stroke="#a6a6a6" stroke-width="0.7"/><path d="M3.8 1.6v1.4 M97.6 1.6v1.4" stroke="#b4b4b4" stroke-width="0.7"/></svg>
<div class="abs btn" style="left:242px;top:291px;width:61.7px;height:17.2px;line-height:16.6px">Reset</div>

<div class="abs btn" style="left:248.5px;top:337.4px;width:62.2px;height:18.2px;line-height:17.8px">Ok</div>

</div>
</body></html>
